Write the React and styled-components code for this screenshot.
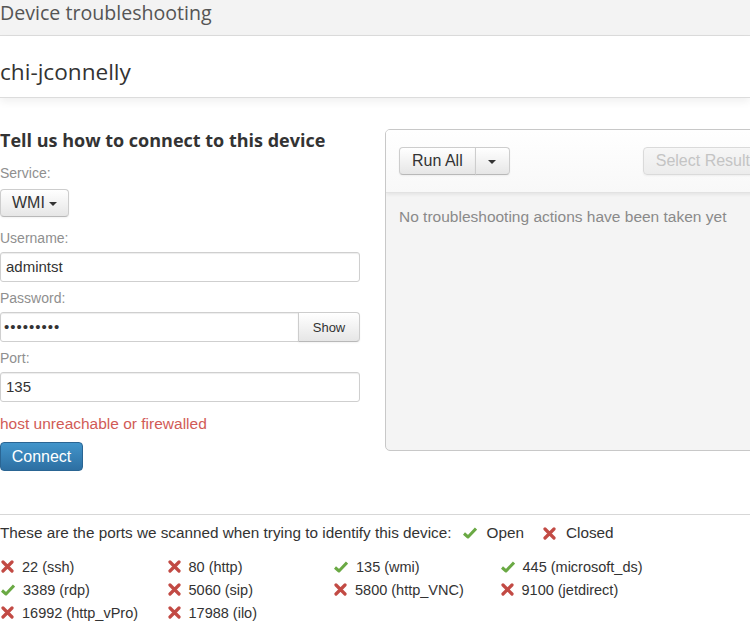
import React from "react";
import styled, { createGlobalStyle } from "styled-components";

const Global = createGlobalStyle`
  html, body {
    margin: 0;
    padding: 0;
    background: #fff;
    overflow: hidden;
  }
  body {
    font-family: "Liberation Sans", Arial, sans-serif;
    color: #333;
  }
`;

const Page = styled.div`
  width: 750px;
  height: 635px;
  overflow: hidden;
`;

const TopBar = styled.div`
  height: 36px;
  background: #f3f3f3;
  border-bottom: 1px solid #dcdcdc;
  font-family: "Open Sans", sans-serif;
  font-size: 19.6px;
  line-height: 25px;
  color: #555;
  box-sizing: border-box;
`;

const DeviceBar = styled.div`
  height: 62px;
  border-bottom: 1px solid #dcdcdc;
  box-shadow: 0 4px 8px rgba(0, 0, 0, 0.06);
  font-family: "Open Sans", sans-serif;
  font-size: 22.6px;
  line-height: 72px;
  color: #333;
  box-sizing: border-box;
`;

const Main = styled.div`
  display: flex;
  gap: 25px;
  padding-top: 31px;
  width: 1000px;
`;

const Form = styled.div`
  width: 360px;
  flex: none;
`;

const Heading = styled.h3`
  margin: 0 0 14px;
  font-family: "Open Sans", sans-serif;
  font-weight: 700;
  font-size: 18px;
  line-height: 22px;
  color: #333;
`;

const Label = styled.div`
  font-size: 14px;
  line-height: 16px;
  color: #8f8f8f;
  margin: ${(p) => p.$top || 0}px 0 ${(p) => p.$bottom ?? 6}px;
`;

const Btn = styled.button`
  display: inline-flex;
  align-items: center;
  justify-content: center;
  gap: 4px;
  height: 28px;
  padding: 0 ${(p) => p.$pad ?? 11}px;
  white-space: nowrap;
  font-family: "Liberation Sans", Arial, sans-serif;
  font-size: ${(p) => p.$size ?? 15}px;
  color: #333;
  background: linear-gradient(#ffffff, #e6e6e6);
  border: 1px solid #cdcdcd;
  border-bottom-color: #b8b8b8;
  border-radius: 4px;
  box-sizing: border-box;
  box-shadow: inset 0 1px 0 rgba(255, 255, 255, 0.2), 0 1px 2px rgba(0, 0, 0, 0.05);
`;

const Caret = styled.span`
  width: 0;
  height: 0;
  border-left: 4px solid transparent;
  border-right: 4px solid transparent;
  border-top: 4px solid #333;
  margin-top: 1px;
`;

const Input = styled.div`
  height: 30px;
  flex: 1;
  border: 1px solid #cfcfcf;
  border-radius: ${(p) => (p.$joined ? "3px 0 0 3px" : "3px")};
  box-shadow: inset 0 1px 1px rgba(0, 0, 0, 0.075);
  box-sizing: border-box;
  padding-left: 5px;
  font-size: 15px;
  line-height: 28px;
  color: #333;
  background: #fff;
`;

const Dots = styled.span`
  font-size: 15px;
  letter-spacing: 1px;
  margin-left: -2px;
`;

const InputRow = styled.div`
  display: flex;
  width: 360px;
`;

const AddonBtn = styled(Btn)`
  height: 30px;
  width: 62px;
  margin-left: -1px;
  border-radius: 0 4px 4px 0;
  font-size: 13px;
`;

const Error = styled.div`
  color: #d15b56;
  font-size: 15.5px;
  line-height: 18px;
  margin: 13px 0 9px;
`;

const Primary = styled.button`
  display: block;
  height: 29px;
  width: 83px;
  font-family: "Liberation Sans", Arial, sans-serif;
  font-size: 16px;
  color: #fff;
  background: linear-gradient(#4295cb, #2d6fa2);
  border: 1px solid #2a6593;
  border-radius: 4px;
  padding: 0;
`;

const Panel = styled.div`
  width: 400px;
  height: 322px;
  border: 1px solid #c8c8c8;
  border-radius: 5px;
  background: #f4f4f4;
  overflow: hidden;
  box-sizing: border-box;
`;

const PanelHead = styled.div`
  height: 63px;
  display: flex;
  align-items: center;
  justify-content: space-between;
  padding: 0 13px;
  background: linear-gradient(#ffffff, #f8f8f8);
  border-bottom: 1px solid #e2e2e2;
  box-shadow: 0 2px 3px rgba(0, 0, 0, 0.06);
  box-sizing: border-box;
`;

const Split = styled.div`
  display: flex;
`;

const SplitMain = styled(Btn)`
  border-radius: 4px 0 0 4px;
`;

const SplitCaret = styled(Btn)`
  border-radius: 0 4px 4px 0;
  margin-left: -1px;
  width: 35px;
`;

const Disabled = styled(Btn)`
  color: #c4c4c4;
  background: linear-gradient(#f6f6f6, #ececec);
  border-color: #dadada;
`;

const Empty = styled.div`
  padding: 15px 13px;
  font-size: 15.5px;
  color: #8a8a8a;
`;

const Rule = styled.hr`
  margin: 43px 0 0;
  border: 0;
  border-top: 1px solid #d7d7d7;
`;

const Legend = styled.div`
  display: flex;
  align-items: center;
  font-size: 15.3px;
  color: #333;
  margin-top: 8px;
  line-height: 20px;
`;

const LegendItem = styled.span`
  display: inline-flex;
  align-items: center;
  gap: 10px;
  margin-left: ${(p) => p.$gap}px;
`;

const Ports = styled.div`
  display: grid;
  grid-template-columns: repeat(4, 166.5px);
  grid-auto-rows: 23px;
  margin-top: 12px;
`;

const Port = styled.div`
  display: flex;
  align-items: center;
  gap: 8px;
  font-size: 14.5px;
  color: #333;
  padding-left: 1px;
`;

const Check = () => (
  <svg width="14" height="12" viewBox="0 0 14 12">
    <path d="M1 6.5 L5 10 L13 1.5" fill="none" stroke="#6aa944" strokeWidth="3" strokeLinejoin="round" />
  </svg>
);

const Cross = () => (
  <svg width="13" height="13" viewBox="0 0 13 13">
    <path d="M2 2 L11 11 M11 2 L2 11" fill="none" stroke="#c24a44" strokeWidth="3.2" strokeLinecap="round" />
  </svg>
);

const ports = [
  ["22 (ssh)", false],
  ["80 (http)", false],
  ["135 (wmi)", true],
  ["445 (microsoft_ds)", true],
  ["3389 (rdp)", true],
  ["5060 (sip)", false],
  ["5800 (http_VNC)", false],
  ["9100 (jetdirect)", false],
  ["16992 (http_vPro)", false],
  ["17988 (ilo)", false],
];

export default function App() {
  return (
    <Page>
      <Global />
      <TopBar>Device troubleshooting</TopBar>
      <DeviceBar>chi-jconnelly</DeviceBar>
      <Main>
        <Form>
          <Heading>Tell us how to connect to this device</Heading>
          <Label $bottom={8}>Service:</Label>
          <Btn $pad={11} $size={16}>
            WMI <Caret />
          </Btn>
          <Label $top={13}>Username:</Label>
          <InputRow>
            <Input>admintst</Input>
          </InputRow>
          <Label $top={8}>Password:</Label>
          <InputRow>
            <Input $joined>
              <Dots>•••••••••</Dots>
            </Input>
            <AddonBtn>Show</AddonBtn>
          </InputRow>
          <Label $top={8}>Port:</Label>
          <InputRow>
            <Input>135</Input>
          </InputRow>
          <Error>host unreachable or firewalled</Error>
          <Primary>Connect</Primary>
        </Form>
        <Panel>
          <PanelHead>
            <Split>
              <SplitMain $pad={12} $size={16}>Run All</SplitMain>
              <SplitCaret>
                <Caret />
              </SplitCaret>
            </Split>
            <Disabled $pad={12} $size={16}>Select Results</Disabled>
          </PanelHead>
          <Empty>No troubleshooting actions have been taken yet</Empty>
        </Panel>
      </Main>
      <Rule />
      <Legend>
        These are the ports we scanned when trying to identify this device:
        <LegendItem $gap={11}>
          <Check /> Open
        </LegendItem>
        <LegendItem $gap={19}>
          <Cross /> Closed
        </LegendItem>
      </Legend>
      <Ports>
        {ports.map(([name, open]) => (
          <Port key={name}>
            {open ? <Check /> : <Cross />}
            {name}
          </Port>
        ))}
      </Ports>
    </Page>
  );
}
